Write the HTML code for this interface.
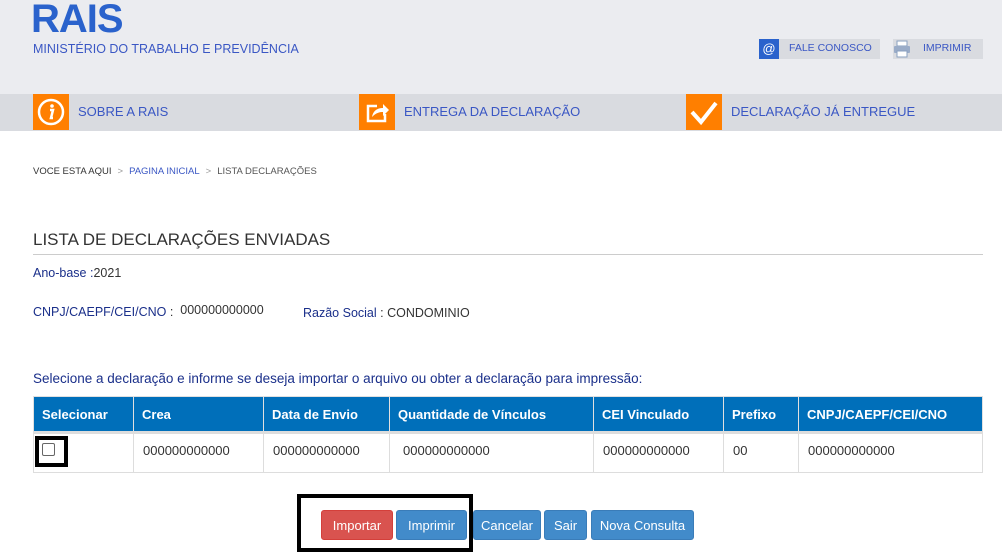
<!DOCTYPE html>
<html><head><meta charset="utf-8"><style>
*{margin:0;padding:0;box-sizing:border-box}
body{width:1002px;height:560px;overflow:hidden;background:#fff;font-family:"Liberation Sans",sans-serif;position:relative}
.abs{position:absolute}
.hdr{left:0;top:0;width:1002px;height:94px;background:#ebecf0}
.nav{left:0;top:94px;width:1002px;height:37px;background:#d9dbe0}
.ico{width:36px;height:36px;background:#ff7f00;top:94px}
.navt{top:104px;font-size:13px;color:#3a57c4}
.bc{top:166px;font-size:9.5px;color:#333}
.bc span{color:#999;margin:0 6px}
.blue{color:#1a2f8a}
table{position:absolute;left:33px;top:396px;width:950px;border-collapse:collapse;font-size:13px}
th{background:#006fba;color:#fff;text-align:left;font-weight:bold;height:36px;padding:0 8px;border:1px solid #e0e0e0;border-bottom:3px solid #ddd}
td{height:40px;padding:0 9px 6px;border:1px solid #ddd;color:#333}
.btn{top:510px;height:30px;border-radius:3px;color:#fff;font-size:13px;text-align:center;line-height:30px;background:#428bca;border:1px solid #3a7cb8}
</style></head><body>
<div class="abs hdr"></div>
<div class="abs" style="left:31px;top:-3px;font-size:40px;font-weight:bold;color:#2a62cc;letter-spacing:-1px">RAIS</div>
<div class="abs" style="left:33px;top:42px;font-size:12.5px;color:#3a57c4">MINISTÉRIO DO TRABALHO E PREVIDÊNCIA</div>
<div class="abs" style="left:759px;top:39px;width:121px;height:20px;background:#d9dbe0"></div>
<div class="abs" style="left:759px;top:39px;width:20px;height:20px;background:#2a62cc;color:#fff;font-size:13px;text-align:center;line-height:19px">@</div>
<div class="abs" style="left:789px;top:42px;font-size:10.5px;color:#3a57c4">FALE CONOSCO</div>
<div class="abs" style="left:893px;top:39px;width:90px;height:20px;background:#d9dbe0"></div>
<svg class="abs" style="left:893px;top:40px" width="18" height="18" viewBox="0 0 18 18"><rect x="4" y="1" width="10" height="5" fill="#fff" stroke="#8aa0c0"/><rect x="1" y="6" width="16" height="7" rx="1" fill="#9aacc8"/><rect x="4" y="11" width="10" height="6" fill="#fff" stroke="#8aa0c0"/></svg>
<div class="abs" style="left:923px;top:42px;font-size:10.5px;color:#3a57c4">IMPRIMIR</div>
<div class="abs nav"></div>
<div class="abs ico" style="left:33px"><svg width="36" height="36"><circle cx="18" cy="18" r="12" fill="none" stroke="#fff" stroke-width="2.5"/><circle cx="19" cy="12" r="1.8" fill="#fff"/><path d="M17 16h3l-2 8h2" fill="none" stroke="#fff" stroke-width="2.5"/></svg></div>
<div class="abs navt" style="left:78px">SOBRE A RAIS</div>
<div class="abs ico" style="left:359px"><svg width="36" height="36"><path d="M18 12H9v15h17v-7" fill="none" stroke="#fff" stroke-width="2.5"/><path d="M13 23c1-6 5-9 11-9v-4l6 6-6 6v-4c-5 0-8 2-11 5z" fill="#fff"/></svg></div>
<div class="abs navt" style="left:404px">ENTREGA DA DECLARAÇÃO</div>
<div class="abs ico" style="left:686px"><svg width="36" height="36"><path d="M6 18l9 10 15-19" fill="none" stroke="#fff" stroke-width="4"/></svg></div>
<div class="abs navt" style="left:731px">DECLARAÇÃO JÁ ENTREGUE</div>
<div class="abs bc" style="left:33px">VOCE ESTA AQUI<span>&gt;</span><b style="font-weight:normal;color:#3a57c4">PAGINA INICIAL</b><span>&gt;</span><b style="font-weight:normal;color:#555">LISTA DECLARAÇÕES</b></div>
<div class="abs" style="left:33px;top:230px;font-size:17px;color:#333">LISTA DE DECLARAÇÕES ENVIADAS</div>
<div class="abs" style="left:33px;top:254px;width:950px;height:1px;background:#ccc"></div>
<div class="abs" style="left:33px;top:266px;font-size:12.5px;color:#333"><span class="blue">Ano-base :</span>2021</div>
<div class="abs" style="left:33px;top:305px;font-size:12.5px;color:#333"><span class="blue">CNPJ/CAEPF/CEI/CNO</span> :&nbsp; <span style="position:relative;top:-2px">000000000000</span></div>
<div class="abs" style="left:303px;top:306px;font-size:12.5px;color:#333"><span class="blue">Razão Social</span> : CONDOMINIO</div>
<div class="abs blue" style="left:33px;top:371px;font-size:13.5px">Selecione a declaração e informe se deseja importar o arquivo ou obter a declaração para impressão:</div>
<table>
<tr><th style="width:100px">Selecionar</th><th style="width:130px">Crea</th><th style="width:126px">Data de Envio</th><th style="width:204px">Quantidade de Vínculos</th><th style="width:130px">CEI Vinculado</th><th style="width:75px">Prefixo</th><th>CNPJ/CAEPF/CEI/CNO</th></tr>
<tr><td></td><td>000000000000</td><td>000000000000</td><td style="padding-left:13px">000000000000</td><td>000000000000</td><td>00</td><td>000000000000</td></tr>
</table>
<div class="abs" style="left:35px;top:436px;width:33px;height:31px;border:4px solid #000;background:#fff"></div>
<div class="abs" style="left:42px;top:443px;width:13px;height:13px;border:1px solid #666;border-radius:2px"></div>
<div class="abs" style="left:297px;top:494px;width:176px;height:58px;border:4px solid #000"></div>
<div class="abs btn" style="left:321px;width:72px;background:#d9534f;border-color:#d43f3a">Importar</div>
<div class="abs btn" style="left:396px;width:71px">Imprimir</div>
<div class="abs btn" style="left:473px;width:68px">Cancelar</div>
<div class="abs btn" style="left:544px;width:43px">Sair</div>
<div class="abs btn" style="left:591px;width:103px">Nova Consulta</div>
</body></html>
